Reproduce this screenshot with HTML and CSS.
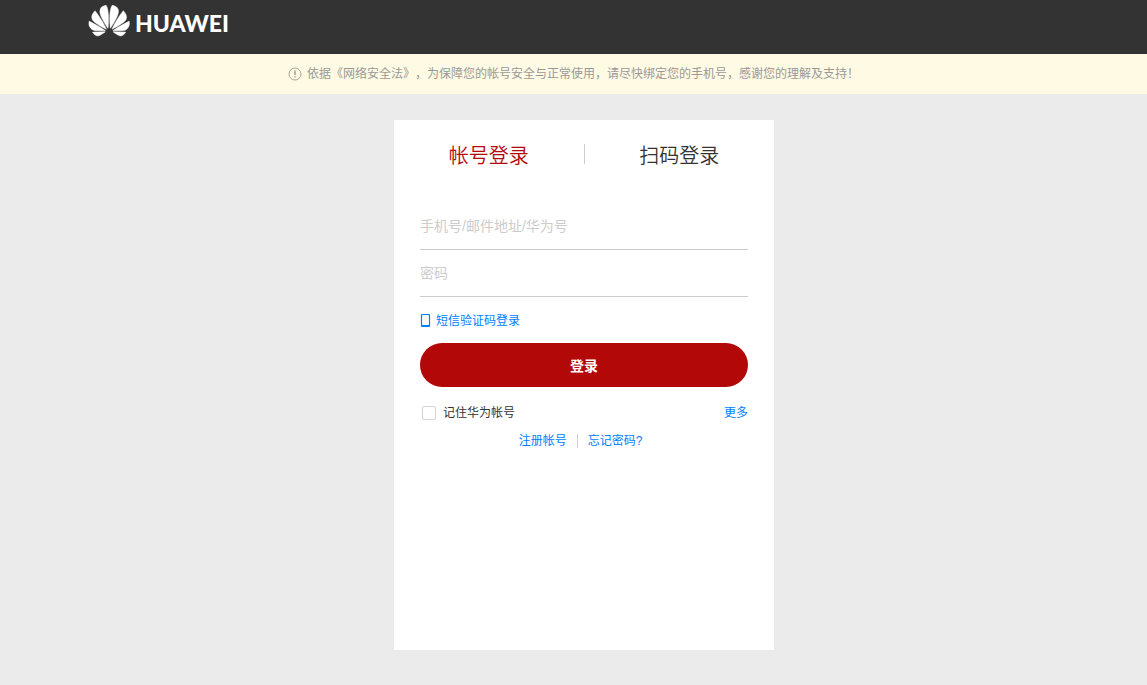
FILE: index.html
```html
<!DOCTYPE html>
<html lang="zh-CN">
<head>
<meta charset="utf-8">
<meta name="viewport" content="width=device-width, initial-scale=1">
<title>华为帐号登录</title>
<link rel="stylesheet" href="styles.css">
</head>
<body>
<header class="header">
  <a class="brand" href="#">
    <svg class="brand-mark" viewBox="-0.4 2.76 24.6 18.9" aria-hidden="true"><path fill="#fff" stroke="#fff" stroke-width=".25" d="M3.67 6.14S1.82 7.91 1.72 9.78v.35c.08 1.51 1.22 2.4 1.22 2.4 1.83 1.79 6.26 4.04 7.3 4.55 0 0 .06.03.1-.01l.02-.04v-.04C7.52 10.8 3.67 6.14 3.67 6.14zM9.65 18.6c-.02-.08-.1-.08-.1-.08l-7.38.26c.8 1.43 2.15 2.53 3.56 2.2.96-.25 3.16-1.78 3.88-2.3.06-.05.04-.09.04-.09zm.08-.78C6.49 15.63.21 12.28.21 12.28c-.15.46-.2.9-.21 1.3v.07c0 1.07.4 1.82.4 1.82.8 1.69 2.34 2.2 2.34 2.2.7.3 1.4.31 1.4.31.12.02 4.4 0 5.54 0 .05 0 .08-.05.08-.05v-.06c0-.03-.03-.05-.03-.05zM9.06 3.19a3.42 3.42 0 00-2.57 3.15v.41c.03.6.16 1.05.16 1.05.66 2.9 3.86 7.65 4.55 8.65.05.05.1.03.1.03a.1.1 0 00.06-.1c1.06-10.6-1.11-13.42-1.11-13.42-.32.02-1.19.23-1.19.23zm8.299 2.27s-.49-1.8-2.44-2.28c0 0-.57-.14-1.17-.22 0 0-2.18 2.81-1.12 13.43.01.07.06.08.06.08.07.03.1-.03.1-.03.72-1.03 3.9-5.76 4.55-8.64 0 0 .36-1.4.02-2.34zm-2.92 13.07s-.07 0-.09.05c0 0-.01.07.03.1.7.51 2.85 2 3.88 2.3 0 0 .16.05.43.06h.14c.69-.02 1.9-.37 3-2.26l-7.4-.25zm7.83-8.41c.14-2.06-1.94-3.97-1.94-3.98 0 0-3.85 4.66-6.67 10.8 0 0-.03.08.02.13l.04.01h.06c1.06-.53 5.46-2.77 7.28-4.54 0 0 1.15-.93 1.21-2.42zm1.52 2.14s-6.28 3.37-9.52 5.55c0 0-.05.04-.03.11 0 0 .03.06.07.06 1.16 0 5.56 0 5.67-.02 0 0 .57-.02 1.27-.29 0 0 1.56-.5 2.37-2.27 0 0 .73-1.45.17-3.14z"/></svg>
    <span class="brand-name">HUAWEI</span>
  </a>
</header>
<div class="notice">
  <svg class="notice-icon" viewBox="0 0 14 14" aria-hidden="true"><circle cx="7" cy="7" r="6" fill="none" stroke="#aaa697"/><path d="M7 3.4v4.6M7 9.2v1.4" stroke="#999" stroke-width="1.4"/></svg>
  <span>依据《网络安全法》，为保障您的帐号安全与正常使用，请尽快绑定您的手机号，感谢您的理解及支持！</span>
</div>
<main class="page">
  <section class="card">
    <div class="tabs">
      <button class="tab tab-active" type="button">帐号登录</button>
      <span class="tab-divider"></span>
      <button class="tab" type="button">扫码登录</button>
    </div>
    <form class="form">
      <input class="field" type="text" placeholder="手机号/邮件地址/华为号" aria-label="手机号/邮件地址/华为号">
      <input class="field" type="password" placeholder="密码" aria-label="密码">
      <a class="link sms" href="#">
        <svg class="sms-icon" viewBox="0 0 11 14" aria-hidden="true"><rect x="1.5" y=".5" width="8" height="12" rx="1" fill="none" stroke="#007dff" stroke-width="1.2"/><path d="M1.5 12h8" stroke="#007dff" stroke-width="2"/></svg>
        <span>短信验证码登录</span>
      </a>
      <button class="submit" type="button">登录</button>
      <div class="options">
        <label class="remember"><input class="check" type="checkbox"><span>记住华为帐号</span></label>
        <a class="link" href="#">更多</a>
      </div>
      <div class="links">
        <a class="link" href="#">注册帐号</a>
        <span class="links-divider"></span>
        <a class="link" href="#">忘记密码?</a>
      </div>
    </form>
  </section>
</main>
</body>
</html>
```

FILE: styles.css
```css
* {
  box-sizing: border-box;
}

body {
  margin: 0;
  min-height: 100vh;
  background: #ebebeb;
  color: #333;
  font: 12px/20px "Liberation Sans", "Noto Sans CJK SC", sans-serif;
  text-spacing-trim: space-all;
}

button,
input {
  font-family: inherit;
}

.header {
  min-height: 54px;
  padding: 5px 88px 0;
  background: #333;
}

.brand {
  display: inline-flex;
  align-items: center;
  gap: 5px;
  color: #fff;
  text-decoration: none;
}

.brand-mark {
  width: 42px;
  height: 32px;
}

.brand-name {
  padding-top: 4px;
  font: 900 23px/28px Lato, sans-serif;
}

.notice {
  display: flex;
  justify-content: center;
  align-items: center;
  gap: 5px;
  min-height: 40px;
  background: #fffae3;
  color: #999;
}

.notice-icon {
  flex: none;
  width: 14px;
  height: 14px;
}

.page {
  padding: 26px 0 35px 21px;
}

.card {
  max-width: 380px;
  min-height: 530px;
  margin: 0 auto;
  padding-bottom: 26px;
  background: #fff;
}

.tabs {
  display: flex;
  align-items: center;
  padding-top: 14px;
}

.tab {
  flex: 1;
  padding: 4px 0 0;
  border: 0;
  background: none;
  color: #333;
  font-size: 20px;
  font-weight: 350;
  line-height: 36px;
}

.tab-active {
  color: #b30808;
}

.tab-divider {
  width: 1px;
  height: 20px;
  background: #ccc;
}

.form {
  padding: 29px 26px 0;
}

.field {
  display: block;
  width: 100%;
  height: 47px;
  padding: 0;
  border: 0;
  border-bottom: 1px solid #ccc;
  background: none;
  color: #333;
  font-size: 14px;
  outline: none;
}

.field::placeholder {
  color: #ccc;
  opacity: 1;
}

.link {
  color: #007dff;
  text-decoration: none;
}

.sms {
  display: flex;
  align-items: center;
  gap: 5px;
  margin: 14px 0 12px;
}

.sms-icon {
  width: 11px;
  height: 14px;
}

.submit {
  display: block;
  width: 100%;
  height: 44px;
  border: 0;
  border-radius: 22px;
  background: #b30808;
  color: #fff;
  font-size: 14px;
  font-weight: 700;
}

.options {
  display: flex;
  justify-content: space-between;
  align-items: center;
  margin-top: 16px;
}

.remember {
  display: flex;
  align-items: center;
  gap: 7px;
  padding-left: 2px;
}

.check {
  appearance: none;
  width: 14px;
  height: 14px;
  margin: 0;
  border: 1px solid #d4d4d4;
  border-radius: 2px;
  background: #fff;
}

.check:checked {
  background: #007dff;
}

.links {
  display: flex;
  justify-content: center;
  align-items: center;
  gap: 10px;
  margin-top: 8px;
  padding-right: 7px;
}

.links-divider {
  width: 1px;
  height: 14px;
  background: #ccc;
}
```
